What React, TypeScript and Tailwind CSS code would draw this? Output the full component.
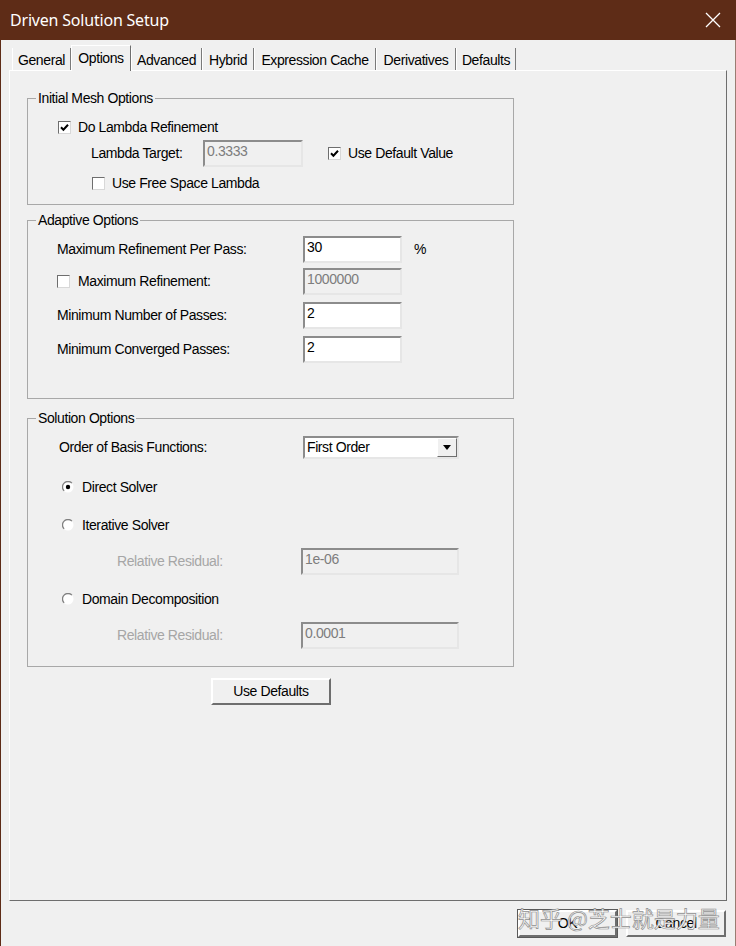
import clsx from 'clsx'

function Checkbox({ checked = false }: { checked?: boolean }) {
  return (
    <span className="inline-flex h-[13px] w-[13px] shrink-0 items-center justify-center border border-t-[#6e6e6e] border-l-[#6e6e6e] border-r-[#d8d8d8] border-b-[#d8d8d8] bg-white">
      {checked && (
        <svg width="9" height="9" viewBox="0 0 9 9">
          <path d="M1 4.3 L3.4 6.7 L8 1.8" stroke="#000" strokeWidth="2" fill="none" />
        </svg>
      )}
    </span>
  )
}

function Radio({ checked = false }: { checked?: boolean }) {
  return (
    <svg width="12" height="12" viewBox="0 0 12 12" className="shrink-0">
      <circle cx="6" cy="6" r="5.5" fill="#fff" />
      <path d="M2.1 9.9 A5.5 5.5 0 0 1 9.9 2.1" stroke="#808080" strokeWidth="1.3" fill="none" />
      {checked && <circle cx="6" cy="6" r="2.2" fill="#000" />}
    </svg>
  )
}

function TextBox({ value, disabled = false, className }: { value: string; disabled?: boolean; className: string }) {
  return (
    <div
      className={clsx(
        'h-[27px] shrink-0 border-2 border-t-[#8c8c8c] border-l-[#8c8c8c] border-r-[#e6e6e6] border-b-[#e6e6e6] pl-[2px] pt-[1px] leading-[16px]',
        disabled ? 'bg-[#f0f0f0] text-[#7d7d7d]' : 'bg-white text-black',
        className,
      )}
    >
      {value}
    </div>
  )
}

function Tab({ label, width, selected = false }: { label: string; width: string; selected?: boolean }) {
  if (selected) {
    return (
      <div
        className={clsx(
          'relative z-10 -mb-px flex h-[26px] items-start justify-center border-l border-t border-r border-l-white border-t-white border-r-[#6e6e6e] bg-[#f0f0f0] pt-[2px]',
          width,
        )}
      >
        {label}
      </div>
    )
  }
  return (
    <div className={clsx('flex h-[22px] items-center justify-center border-l border-r border-l-white border-r-[#7a7a7a] pt-[2px]', width)}>
      {label}
    </div>
  )
}

function Button({ label, isDefault = false, className }: { label: string; isDefault?: boolean; className: string }) {
  return (
    <div
      className={clsx(
        'flex h-[27px] items-center justify-center border-2 border-t-white border-l-white border-r-[#6e6e6e] border-b-[#6e6e6e] bg-[#f0f0f0]',
        isDefault && 'outline outline-1 outline-[#5a5a5a]',
        className,
      )}
    >
      {label}
    </div>
  )
}

export default function App() {
  return (
    <div className="relative flex h-[946px] w-[736px] flex-col bg-[#f0f0f0] font-['Liberation_Sans',Arial,sans-serif] text-[14px] tracking-[-0.4px] text-black">
      {/* title bar */}
      <div className="flex h-[40px] shrink-0 items-center justify-between bg-[#5e2c17] pl-[10px] pr-[15px]">
        <span className="font-['Noto_Sans',sans-serif] text-[16px] tracking-[-0.2px] text-white">Driven Solution Setup</span>
        <svg width="16" height="16" viewBox="0 0 16 16">
          <path d="M1 1 L15 15 M15 1 L1 15" stroke="#fff" strokeWidth="1.3" />
        </svg>
      </div>

      <div className="flex flex-1 flex-col border-l border-r border-l-[#5e2c17] border-r-[#9a7d72] pl-[8px] pt-[5px]">
        {/* tabs */}
        <div className="ml-[3px] flex h-[25px] items-end">
          <Tab label="General" width="w-[59px]" />
          <Tab label="Options" width="w-[60px]" selected />
          <Tab label="Advanced" width="w-[71px]" />
          <Tab label="Hybrid" width="w-[52px]" />
          <Tab label="Expression Cache" width="w-[122px]" />
          <Tab label="Derivatives" width="w-[80px]" />
          <Tab label="Defaults" width="w-[60px]" />
        </div>

        {/* panel */}
        <div className="flex h-[831px] w-[718px] flex-col border border-t-white border-l-white border-r-[#6e6e6e] border-b-[#6e6e6e] pl-[17px] pt-[19px]">
          <fieldset className="h-[115px] w-[487px] border border-[#a8a8a8]">
            <legend className="ml-[8px] px-[2px] leading-[16px]">Initial Mesh Options</legend>
            <div className="mt-[11px] flex h-[20px] items-center pl-[30px]">
              <Checkbox checked />
              <span className="ml-[7px]">Do Lambda Refinement</span>
            </div>
            <div className="mt-[3px] flex h-[27px] items-center pl-[63px]">
              <span className="w-[112px]">Lambda Target:</span>
              <TextBox value="0.3333" disabled className="w-[100px]" />
              <span className="ml-[25px] flex items-center">
                <Checkbox checked />
                <span className="ml-[7px]">Use Default Value</span>
              </span>
            </div>
            <div className="mt-[6px] flex h-[20px] items-center pl-[64px]">
              <Checkbox />
              <span className="ml-[7px]">Use Free Space Lambda</span>
            </div>
          </fieldset>

          <fieldset className="mt-[7px] h-[187px] w-[487px] border border-[#a8a8a8]">
            <legend className="ml-[8px] px-[2px] leading-[16px]">Adaptive Options</legend>
            <div className="mt-[8px] flex h-[27px] items-center pl-[29px]">
              <span className="w-[246px]">Maximum Refinement Per Pass:</span>
              <TextBox value="30" className="w-[99px]" />
              <span className="ml-[12px]">%</span>
            </div>
            <div className="mt-[5px] flex h-[27px] items-center pl-[29px]">
              <span className="flex w-[246px] items-center">
                <Checkbox />
                <span className="ml-[8px]">Maximum Refinement:</span>
              </span>
              <TextBox value="1000000" disabled className="w-[99px]" />
            </div>
            <div className="mt-[7px] flex h-[27px] items-center pl-[29px]">
              <span className="w-[246px]">Minimum Number of Passes:</span>
              <TextBox value="2" className="w-[99px]" />
            </div>
            <div className="mt-[7px] flex h-[27px] items-center pl-[29px]">
              <span className="w-[246px]">Minimum Converged Passes:</span>
              <TextBox value="2" className="w-[99px]" />
            </div>
          </fieldset>

          <fieldset className="mt-[11px] h-[257px] w-[487px] border border-[#a8a8a8]">
            <legend className="ml-[8px] px-[2px] leading-[16px]">Solution Options</legend>
            <div className="mt-[10px] flex h-[23px] items-center pl-[31px]">
              <span className="w-[244px]">Order of Basis Functions:</span>
              <div className="flex h-[23px] w-[156px] items-center border-2 border-t-[#8c8c8c] border-l-[#8c8c8c] border-r-[#e6e6e6] border-b-[#e6e6e6] bg-white">
                <span className="flex-1 pl-[2px]">First Order</span>
                <div className="flex h-[19px] w-[20px] items-center justify-center border border-t-white border-l-white border-r-[#6e6e6e] border-b-[#6e6e6e] bg-[#f0f0f0]">
                  <svg width="8" height="5" viewBox="0 0 8 5">
                    <path d="M0 0 H8 L4 5 Z" fill="#000" />
                  </svg>
                </div>
              </div>
            </div>
            <div className="mt-[18px] flex h-[20px] items-center pl-[34px]">
              <Radio checked />
              <span className="ml-[8px]">Direct Solver</span>
            </div>
            <div className="mt-[18px] flex h-[20px] items-center pl-[34px]">
              <Radio />
              <span className="ml-[8px]">Iterative Solver</span>
            </div>
            <div className="mt-[13px] flex h-[27px] items-center pl-[89px]">
              <span className="w-[184px] text-[#a6a6a6]">Relative Residual:</span>
              <TextBox value="1e-06" disabled className="w-[158px]" />
            </div>
            <div className="mt-[14px] flex h-[20px] items-center pl-[34px]">
              <Radio />
              <span className="ml-[8px]">Domain Decomposition</span>
            </div>
            <div className="mt-[13px] flex h-[27px] items-center pl-[89px]">
              <span className="w-[184px] text-[#a6a6a6]">Relative Residual:</span>
              <TextBox value="0.0001" disabled className="w-[158px]" />
            </div>
          </fieldset>

          <Button label="Use Defaults" className="ml-[184px] mt-[11px] w-[120px]" />
        </div>

        {/* dialog buttons */}
        <div className="mt-[9px] flex justify-end gap-[9px] pr-[9px]">
          <Button label="OK" isDefault className="w-[99px]" />
          <Button label="Cancel" className="w-[100px]" />
        </div>
      </div>

      {/* watermark */}
      <span className="absolute left-[518px] top-[902px] font-['Noto_Sans_CJK_SC',sans-serif] text-[22px] leading-[30px] tracking-[0px] text-white [-webkit-text-stroke:0.7px_#8f8f8f]">
        知乎 @芝士就是力量
      </span>
    </div>
  )
}
